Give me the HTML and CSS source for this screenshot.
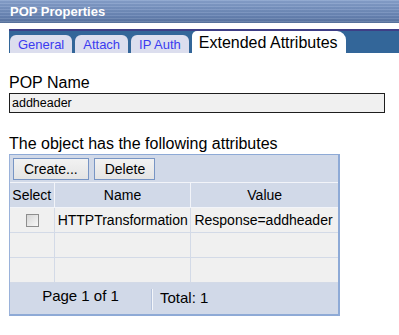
FILE: index.html
```html
<!DOCTYPE html>
<html>
<head>
<meta charset="utf-8">
<link rel="stylesheet" href="styles.css">
</head>
<body>
<div class="titlebar">POP Properties</div>
<div class="content">
  <div class="tabs">
    <span class="tab">General</span>
    <span class="tab">Attach</span>
    <span class="tab">IP Auth</span>
    <span class="tab active">Extended Attributes</span>
  </div>
  <div class="label">POP Name</div>
  <div class="field">addheader</div>
  <div class="caption">The object has the following attributes</div>
  <div class="grid">
    <div class="toolbar">
      <span class="btn btn-create">Create...</span>
      <span class="btn btn-delete">Delete</span>
    </div>
    <table class="attrs">
      <tr class="head">
        <td class="c-sel">Select</td>
        <td class="c-name">Name</td>
        <td class="c-val">Value</td>
      </tr>
      <tr class="row">
        <td class="c-sel"><span class="check"></span></td>
        <td class="c-name">HTTPTransformation</td>
        <td class="c-val">Response=addheader</td>
      </tr>
      <tr class="row">
        <td class="c-sel"></td>
        <td class="c-name"></td>
        <td class="c-val"></td>
      </tr>
      <tr class="row">
        <td class="c-sel"></td>
        <td class="c-name"></td>
        <td class="c-val"></td>
      </tr>
    </table>
    <div class="footer">
      <div class="pager">Page 1 of 1</div>
      <div class="sep"></div>
      <div class="total">Total: 1</div>
    </div>
  </div>
</div>
</body>
</html>
```

FILE: styles.css
```css
html, body {
  margin: 0;
  padding: 0;
  background: #ffffff;
  font-family: "Liberation Sans", Arial, sans-serif;
  color: #000;
}

.titlebar {
  height: 23px;
  line-height: 23px;
  padding-left: 10px;
  color: #ffffff;
  font-weight: bold;
  font-size: 13px;
  background:
    repeating-linear-gradient(to bottom, rgba(255,255,255,0.10) 0 1px, rgba(0,0,0,0.03) 1px 3px),
    linear-gradient(to bottom, #87a1cc, #6783b3 70%, #58739f);
  box-sizing: border-box;
}

.content {
  padding-left: 9px;
}

.tabs {
  margin-top: 6px;
  height: 22px;
  border-top: 2px solid #3e3e86;
  background: #336699;
  display: flex;
  align-items: flex-end;
  gap: 3px;
  padding-left: 1px;
}

.tab {
  height: 18px;
  line-height: 19px;
  font-size: 13px;
  padding: 0 8px;
  background: #dcdeee;
  color: #3b3bf0;
  border-radius: 6px 6px 0 0;
}

.tab.active {
  height: 22px;
  line-height: 23px;
  font-size: 16px;
  padding: 0 8px 0 7px;
  background: #ffffff;
  color: #000;
  border-radius: 5px 9px 0 0;
}

.label {
  margin-top: 21px;
  font-size: 16px;
  line-height: 18px;
}

.field {
  margin-top: 1px;
  width: 376px;
  height: 20px;
  box-sizing: border-box;
  border: 1px solid #1e1e1e;
  background: #f0f0f0;
  font-size: 12.5px;
  line-height: 18px;
  padding-left: 2px;
}

.caption {
  margin-top: 22px;
  font-size: 16px;
  line-height: 18px;
}

.grid {
  margin-top: 1px;
  width: 331px;
  box-sizing: border-box;
  border-top: 1px solid #8eaad6;
  border-left: 1px solid #9ab2da;
  border-right: 2px solid #8eaad6;
  border-bottom: 2px solid #8eaad6;
}

.toolbar {
  height: 28px;
  box-sizing: border-box;
  padding: 3px 0 0 3px;
  background: #d1d9e8;
  border-bottom: 1px solid #f2f4f9;
  display: flex;
  gap: 5px;
  align-items: flex-start;
}

.btn {
  height: 22px;
  box-sizing: border-box;
  line-height: 20px;
  font-size: 14px;
  border: 1px solid #7895c4;
  background: linear-gradient(to bottom, #f2f2f2, #e4e4e4);
  padding: 0 10px;
}

.btn-delete {
  padding: 0 9px 0 10px;
}

.attrs {
  border-collapse: separate;
  border-spacing: 0;
  width: 328px;
  font-size: 14px;
}

.attrs td {
  height: 24px;
  padding: 0;
  border-right: 1px solid #d3dae7;
  border-bottom: 1px solid #d3dae7;
  vertical-align: middle;
  white-space: nowrap;
}

.attrs td.c-val {
  border-right: none;
}

.c-sel { width: 44px; }
.c-name { width: 136px; }
.c-val { width: 147px; }

.head td {
  background: #d1d9e8;
  text-align: center;
  border-right-color: #f2f4f9;
  border-bottom-color: #f2f4f9;
}

.row td {
  background: #f0f0f0;
}

.row td.c-name,
.row td.c-val {
  padding-left: 3px;
}

.row td.c-name { width: 133px; }
.row td.c-val { width: 144px; }

.row td.c-sel {
  text-align: center;
}

.check {
  display: inline-block;
  width: 13px;
  height: 13px;
  box-sizing: border-box;
  border: 1px solid #8e8e8e;
  background: linear-gradient(135deg, #d6d6d6, #f8f8f8);
  vertical-align: middle;
  margin-left: 1px;
  margin-top: -1px;
}

.footer {
  height: 31px;
  background: #d1d9e8;
  display: flex;
  align-items: flex-start;
  font-size: 15px;
  line-height: 17px;
}

.pager {
  width: 141px;
  text-align: center;
  padding-top: 4px;
}

.sep {
  margin-top: 6px;
  width: 1px;
  height: 21px;
  background: #f4f6fa;
  border-left: 1px solid #b5c3dc;
}

.total {
  padding-left: 7px;
  padding-top: 6px;
}
```
